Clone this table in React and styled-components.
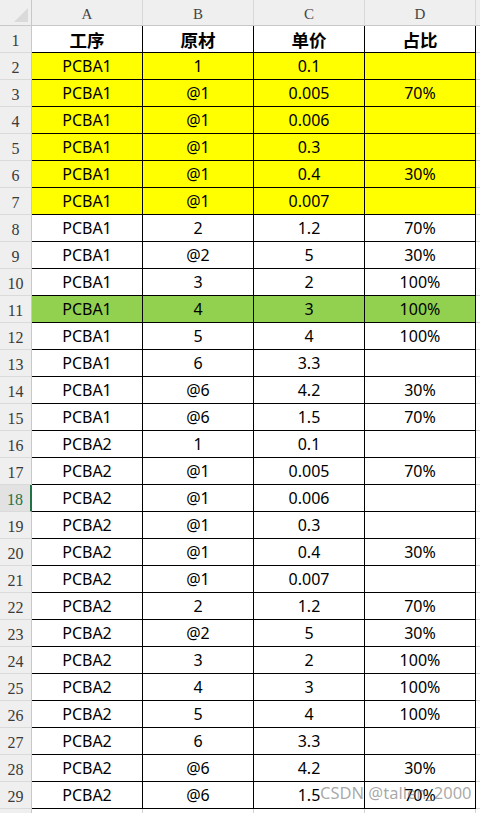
import React from 'react';
import styled, { createGlobalStyle } from 'styled-components';

const GlobalStyle = createGlobalStyle`
    html, body {
        margin: 0;
        padding: 0;
        background: #ffffff;
        overflow: hidden;
    }
`;

const COLORS = {
    y: '#ffff00',
    g: '#92d050',
};

const data = [
    ['PCBA1', '1', '0.1', '', 'y'],
    ['PCBA1', '@1', '0.005', '70%', 'y'],
    ['PCBA1', '@1', '0.006', '', 'y'],
    ['PCBA1', '@1', '0.3', '', 'y'],
    ['PCBA1', '@1', '0.4', '30%', 'y'],
    ['PCBA1', '@1', '0.007', '', 'y'],
    ['PCBA1', '2', '1.2', '70%'],
    ['PCBA1', '@2', '5', '30%'],
    ['PCBA1', '3', '2', '100%'],
    ['PCBA1', '4', '3', '100%', 'g'],
    ['PCBA1', '5', '4', '100%'],
    ['PCBA1', '6', '3.3', ''],
    ['PCBA1', '@6', '4.2', '30%'],
    ['PCBA1', '@6', '1.5', '70%'],
    ['PCBA2', '1', '0.1', ''],
    ['PCBA2', '@1', '0.005', '70%'],
    ['PCBA2', '@1', '0.006', ''],
    ['PCBA2', '@1', '0.3', ''],
    ['PCBA2', '@1', '0.4', '30%'],
    ['PCBA2', '@1', '0.007', ''],
    ['PCBA2', '2', '1.2', '70%'],
    ['PCBA2', '@2', '5', '30%'],
    ['PCBA2', '3', '2', '100%'],
    ['PCBA2', '4', '3', '100%'],
    ['PCBA2', '5', '4', '100%'],
    ['PCBA2', '6', '3.3', ''],
    ['PCBA2', '@6', '4.2', '30%'],
    ['PCBA2', '@6', '1.5', '70%'],
];

const ACTIVE_ROW = 18;

const Sheet = styled.div`
    position: relative;
    display: grid;
    grid-template-columns: 32px repeat(4, 111px) 1fr;
    grid-auto-rows: 27px;
    grid-template-rows: 26px;
    width: 480px;
    height: 813px;
    overflow: hidden;
    font-family: "Noto Sans", "Noto Sans CJK SC", sans-serif;
`;

const Corner = styled.div`
    position: relative;
    background: #efefef;
    border-right: 1px solid #c8c8c8;
    border-bottom: 1px solid #c8c8c8;
    box-sizing: border-box;

    &::after {
        content: "";
        position: absolute;
        right: 3px;
        bottom: 3px;
        width: 0;
        height: 0;
        border-left: 14px solid transparent;
        border-bottom: 14px solid #dadada;
    }
`;

const ColHead = styled.div`
    display: flex;
    align-items: center;
    justify-content: center;
    background: #efefef;
    border-right: 1px solid #d8d8d8;
    border-bottom: 1px solid #c8c8c8;
    box-sizing: border-box;
    font-family: "Liberation Serif", "DejaVu Serif", serif;
    font-size: 15px;
    color: #444;
    padding-top: 3px;
`;

const RowHead = styled.div`
    display: flex;
    align-items: center;
    justify-content: center;
    background: ${p => (p.$active ? '#e2e2e2' : '#efefef')};
    border-right: ${p => (p.$active ? '2px solid #217346' : '1px solid #c8c8c8')};
    border-bottom: 1px solid #dadada;
    box-sizing: border-box;
    font-family: "Liberation Serif", "DejaVu Serif", serif;
    font-size: 16px;
    color: ${p => (p.$active ? '#217346' : '#3a3a3a')};
    padding-top: 4px;
`;

const Cell = styled.div`
    display: flex;
    align-items: center;
    justify-content: center;
    background: ${p => p.$fill || '#ffffff'};
    border-right: 1px solid #000;
    border-bottom: 1px solid #000;
    box-sizing: border-box;
    font-size: ${p => (p.$bold ? '17.5px' : '16px')};
    font-weight: ${p => (p.$bold ? 700 : 400)};
    color: #000;
    white-space: nowrap;
`;

const Spare = styled.div`
    background: #ffffff;
    border-bottom: 1px solid #d4d4d4;
    box-sizing: border-box;
`;

const SpareHead = styled.div`
    background: #efefef;
    border-bottom: 1px solid #c8c8c8;
    box-sizing: border-box;
`;

const BlankCell = styled.div`
    background: #ffffff;
    border-right: 1px solid #d4d4d4;
    border-bottom: 1px solid #d4d4d4;
    box-sizing: border-box;
`;

const Watermark = styled.div`
    position: absolute;
    left: 320px;
    top: 781px;
    font-family: "Noto Sans", sans-serif;
    font-size: 16.5px;
    color: rgba(110, 110, 110, 0.6);
    white-space: nowrap;
    pointer-events: none;
`;

const HeaderCell = ({ children }) => <Cell $bold>{children}</Cell>;

export default function App() {
    return (
        <>
            <GlobalStyle />
            <Sheet>
                <Corner />
                {['A', 'B', 'C', 'D'].map(l => (
                    <ColHead key={l}>{l}</ColHead>
                ))}
                <SpareHead />

                <RowHead>1</RowHead>
                <HeaderCell>工序</HeaderCell>
                <HeaderCell>原材</HeaderCell>
                <HeaderCell>单价</HeaderCell>
                <HeaderCell>占比</HeaderCell>
                <Spare />

                {data.map((row, i) => {
                    const n = i + 2;
                    const fill = COLORS[row[4]];
                    return (
                        <React.Fragment key={n}>
                            <RowHead $active={n === ACTIVE_ROW}>{n}</RowHead>
                            {row.slice(0, 4).map((v, j) => (
                                <Cell key={j} $fill={fill}>{v}</Cell>
                            ))}
                            <Spare />
                        </React.Fragment>
                    );
                })}

                <RowHead />
                <BlankCell />
                <BlankCell />
                <BlankCell />
                <BlankCell />
                <Spare />

                <Watermark>CSDN @tallen_2000</Watermark>
            </Sheet>
        </>
    );
}
